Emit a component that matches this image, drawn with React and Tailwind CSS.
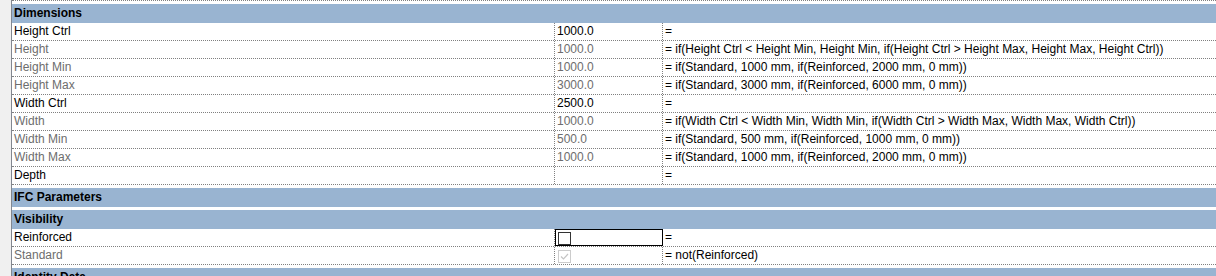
import React from "react";

const groups = [
  {
    title: "Dimensions",
    rows: [
      { name: "Height Ctrl", value: "1000.0", formula: "=", active: true },
      { name: "Height", value: "1000.0", formula: "= if(Height Ctrl < Height Min, Height Min, if(Height Ctrl > Height Max, Height Max, Height Ctrl))" },
      { name: "Height Min", value: "1000.0", formula: "= if(Standard, 1000 mm, if(Reinforced, 2000 mm, 0 mm))" },
      { name: "Height Max", value: "3000.0", formula: "= if(Standard, 3000 mm, if(Reinforced, 6000 mm, 0 mm))" },
      { name: "Width Ctrl", value: "2500.0", formula: "=", active: true },
      { name: "Width", value: "1000.0", formula: "= if(Width Ctrl < Width Min, Width Min, if(Width Ctrl > Width Max, Width Max, Width Ctrl))" },
      { name: "Width Min", value: "500.0", formula: "= if(Standard, 500 mm, if(Reinforced, 1000 mm, 0 mm))" },
      { name: "Width Max", value: "1000.0", formula: "= if(Standard, 1000 mm, if(Reinforced, 2000 mm, 0 mm))" },
      { name: "Depth", value: "", formula: "=", active: true },
    ],
  },
  { title: "IFC Parameters", rows: [] },
  {
    title: "Visibility",
    rows: [
      { name: "Reinforced", check: "empty", formula: "=", active: true, selected: true },
      { name: "Standard", check: "ticked", formula: "= not(Reinforced)" },
    ],
  },
  { title: "Identity Data", rows: [] },
];

const Checkbox = ({ ticked }) =>
  ticked ? (
    <div className="w-[13px] h-[13px] border border-[#cccccc] bg-white flex items-center justify-center">
      <svg width="11" height="11" viewBox="0 0 11 11">
        <path d="M2 5.5 L4.5 8 L9 3" fill="none" stroke="#c4c4c4" strokeWidth="1.2" />
      </svg>
    </div>
  ) : (
    <div className="w-[13px] h-[13px] border border-[#333333] bg-white" />
  );

const Row = ({ row }) => {
  const tone = row.active ? "text-black" : "text-[#6d6d6d]";
  return (
    <div className="flex h-[18px] border-b border-dotted border-[#808080]">
      <div className={`w-[543px] shrink-0 pl-[2px] border-r border-dotted border-[#808080] leading-[17px] ${tone}`}>
        {row.name}
      </div>
      {row.selected ? (
        <div className="w-[108px] h-[17px] shrink-0 border border-black pl-[2px] pt-[2px]">
          <Checkbox ticked={row.check === "ticked"} />
        </div>
      ) : (
        <div className={`w-[108px] shrink-0 pl-[2px] border-r border-dotted border-[#808080] leading-[17px] ${tone}`}>
          {row.check ? (
            <div className="pl-[1px] pt-[3px]">
              <Checkbox ticked={row.check === "ticked"} />
            </div>
          ) : (
            row.value
          )}
        </div>
      )}
      <div className="flex-1 pl-[2px] leading-[17px] text-black whitespace-nowrap">{row.formula}</div>
    </div>
  );
};

export default function App() {
  return (
    <div className="flex w-[1216px] h-[276px] overflow-hidden bg-white text-[12px] font-['Liberation_Sans',Arial,sans-serif]">
      {/* left gutter */}
      <div className="w-[12px] shrink-0 bg-[#f0f0f0] border-r border-[#828790]" />

      <div className="flex-1 flex flex-col">
        {/* tail of the row above */}
        <div className="flex h-[1px] shrink-0 border-b border-dotted border-[#808080]" />

        {groups.map((g) => (
          <div key={g.title} className="shrink-0 pt-[3px]">
            <div className="h-[19px] bg-[#99b4d1] pl-[2px] font-bold leading-[18px] text-black">
              {g.title}
            </div>
            {g.rows.map((r) => (
              <Row key={r.name} row={r} />
            ))}
          </div>
        ))}
      </div>
    </div>
  );
}
